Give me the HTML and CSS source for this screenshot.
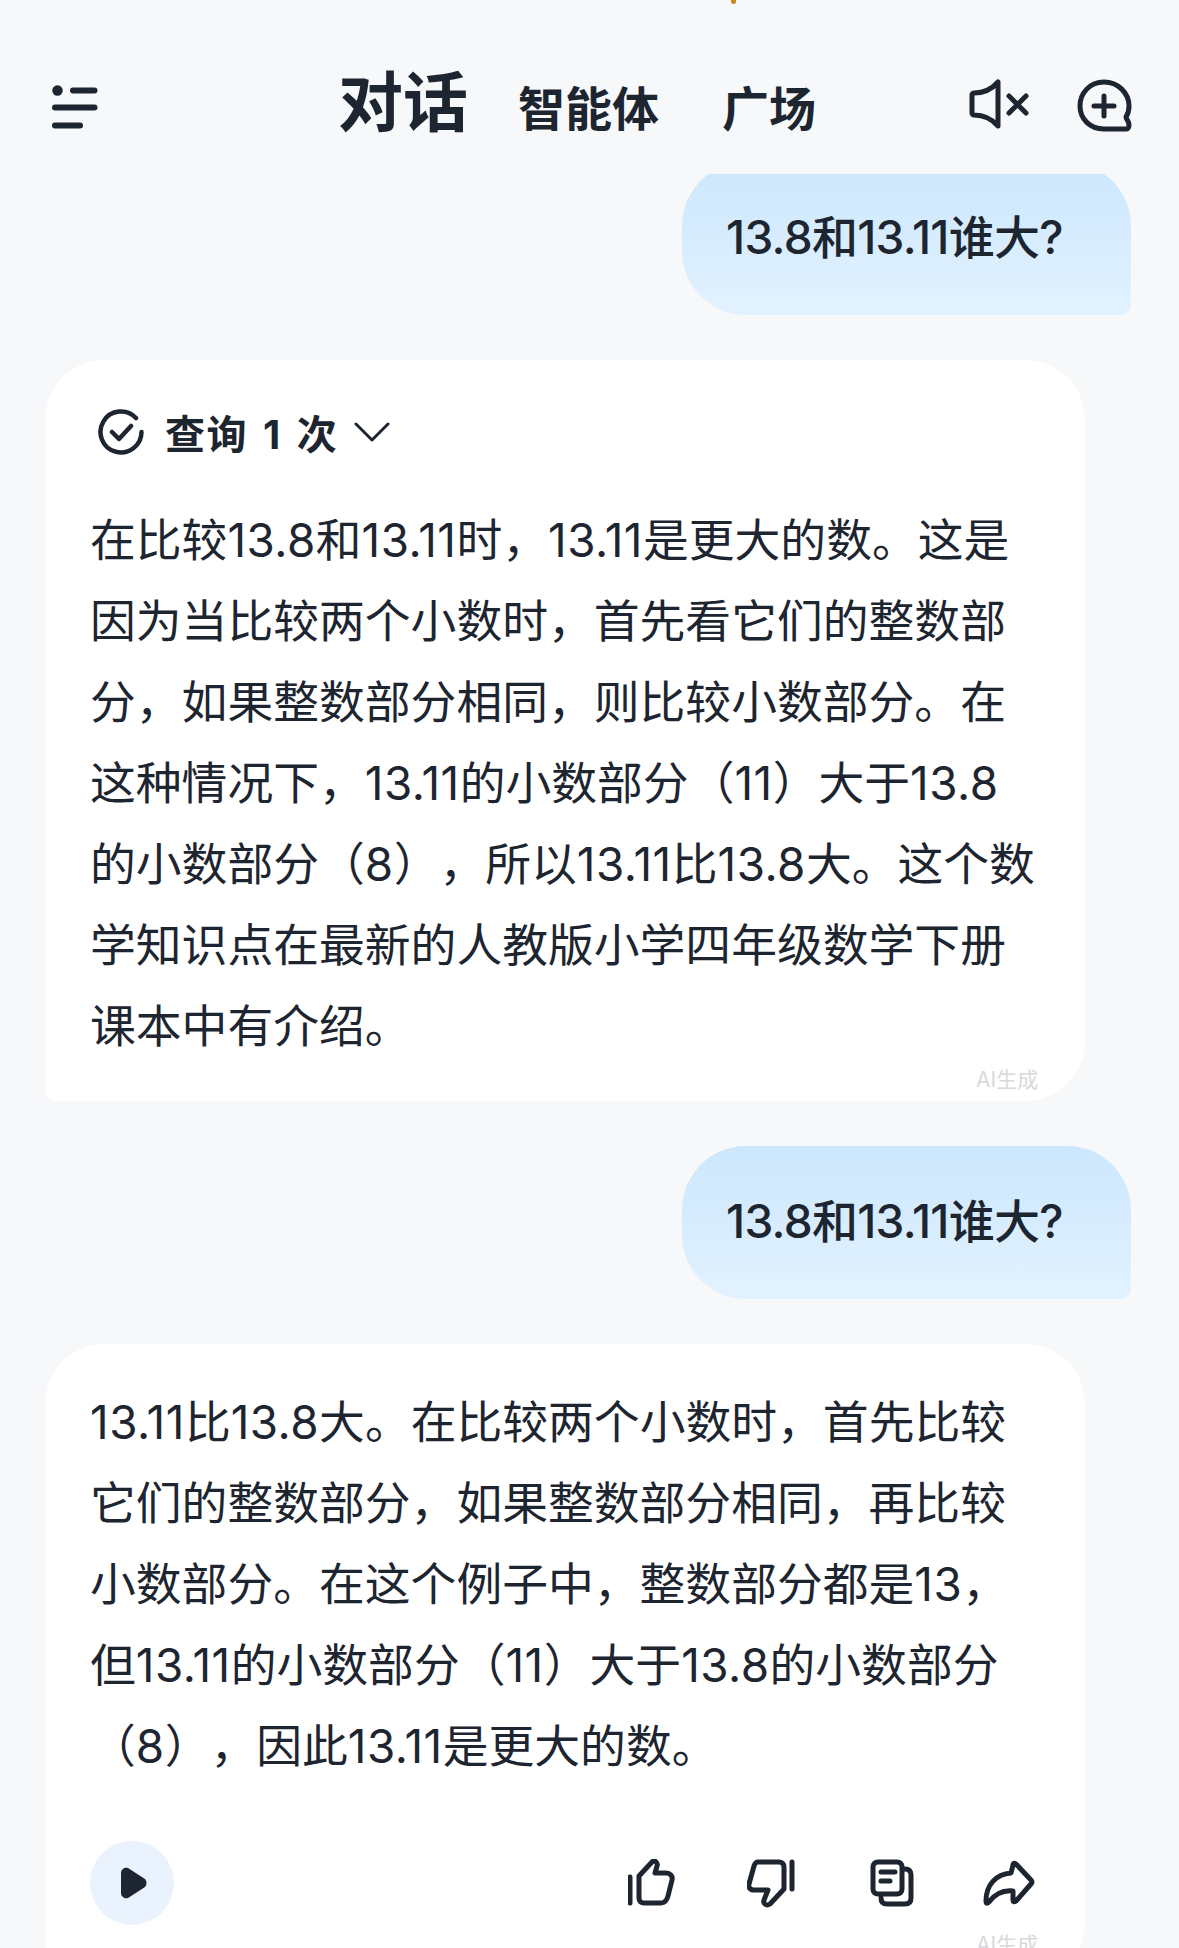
FILE: index.html
```html
<!DOCTYPE html>
<html lang="zh-CN">
<head>
    <meta charset="UTF-8">
    <title>对话</title>
    <link rel="stylesheet" href="styles.css">
</head>
<body>
    <div class="island-dot"></div>

    <header class="topbar">
        <svg class="menu-icon" width="48" height="44" viewBox="0 0 48 44">
            <circle cx="5.500" cy="5.500" r="5.200" />
            <path d="M21 5.500h21.500M3 22.500h39.500M3 40.500h25" />
        </svg>
        <nav class="tabs">
            <span class="tab current">对话</span>
            <span class="tab">智能体</span>
            <span class="tab square">广场</span>
        </nav>
        <div class="top-actions">
            <svg class="mute-icon" width="60" height="50" viewBox="0 0 60 50">
                <path d="M29 3v44c-6-7-13-11-24-11a2 2 0 0 1-2-2V16a2 2 0 0 1 2-2c11 0 18-4 24-11zM40 17l17 17M57 17L40 34" />
            </svg>
            <svg class="new-icon" width="56" height="54" viewBox="0 0 56 54">
                <path d="M50 50H27C13 50 3 40 3 27S13 3 27 3s25 11 25 24c0 4-1 8-3 11 0 2 3 4 3 8 0 2-1 4-2 4zM27 17v20M17 27h20" />
            </svg>
        </div>
    </header>

    <main class="chat">
        <div class="bubble first">13.8和13.11谁大?</div>

        <section class="card">
            <div class="query-row">
                <svg class="check-icon" width="46" height="46" viewBox="0 0 46 46">
                    <path d="M38 9A20.500 20.500 0 1 0 43.500 23M14 23l7 7 12-13" />
                </svg>
                <span class="query-text">查询 1 次</span>
                <svg class="chevron" width="36" height="20" viewBox="0 0 36 20">
                    <path d="M2 2l16 16L34 2" />
                </svg>
            </div>
            <p class="answer">在比较<span class="num">13.8</span>和<span class="num">13.11</span>时，<span class="num">13.11</span>是更大的数。这是<br>因为当比较两个小数时，首先看它们的整数部<br>分，如果整数部分相同，则比较小数部分。在<br>这种情况下，<span class="num">13.11</span>的小数部分（<span class="num">11</span>）大于<span class="num">13.8</span><br>的小数部分（<span class="num">8</span>），所以<span class="num">13.11</span>比<span class="num">13.8</span>大。这个数<br>学知识点在最新的人教版小学四年级数学下册<br>课本中有介绍。</p>
            <span class="ai-tag">AI生成</span>
        </section>

        <div class="bubble">13.8和13.11谁大?</div>

        <section class="card last">
            <p class="answer"><span class="num">13.11</span>比<span class="num">13.8</span>大。在比较两个小数时，首先比较<br>它们的整数部分，如果整数部分相同，再比较<br>小数部分。在这个例子中，整数部分都是<span class="num">13</span>，<br>但<span class="num">13.11</span>的小数部分（<span class="num">11</span>）大于<span class="num">13.8</span>的小数部分<br>（<span class="num">8</span>），因此<span class="num">13.11</span>是更大的数。</p>
            <div class="actions">
                <button class="play">
                    <svg width="28" height="32" viewBox="0 0 28 32">
                        <path class="solid" d="M1 6c0-4 4-6 7-5l17 11c2 2 2 6 0 8L8 31c-3 1-7-1-7-5z" />
                    </svg>
                </button>
                <div class="tools">
                    <svg width="48" height="48" viewBox="0 0 48 48">
                        <path d="M2 18v26M11 17L24 3q2-2 4 0t1 4l-2 7h11c4 0 7 3 6 7l-4 16c-1 4-3 7-7 7H16c-3 0-5-2-5-5z" />
                    </svg>
                    <svg width="48" height="50" viewBox="0 0 48 50">
                        <path d="M45 4v27M11 4h21c3 0 5 2 5 5v22L23 46q-3 2-5 0t-1-4l4-10H7c-4 0-6-3-5-6L7 8c1-3 2-4 4-4z" />
                    </svg>
                    <svg class="copy" width="46" height="50" viewBox="0 0 46 50">
                        <path d="M8 4h19c3 0 5 2 5 5v22c0 3-2 5-5 5H8c-3 0-5-2-5-5V9c0-3 2-5 5-5zM35 11c4 0 6 2 6 6v23c0 4-2 6-6 6H17c-4 0-6-2-6-6M11 14h14M11 23h9" />
                    </svg>
                    <svg class="share" width="52" height="46" viewBox="0 0 52 46">
                        <path d="M30 5q0-3 3-1l15 16q2 2 0 4L33 41q-3 2-3-1v-9c-10-1-18 3-24 11q-3 3-3-1c0-16 10-27 25-28z" />
                    </svg>
                </div>
            </div>
            <span class="ai-tag">AI生成</span>
        </section>
    </main>
</body>
</html>
```

FILE: styles.css
```css
* {
    box-sizing: border-box;
}

html, body {
    margin: 0;
    height: 1948px;
    overflow: hidden;
}

body {
    position: relative;
    background: #f6f8fa;
    color: #1d2530;
    font-family: Inter, "Noto Sans CJK SC", sans-serif;
    text-spacing-trim: space-all;
}

svg path {
    fill: none;
    stroke: #1d2530;
    stroke-width: 5;
    stroke-linecap: round;
    stroke-linejoin: round;
}

svg circle,
svg path.solid {
    fill: #1d2530;
    stroke: none;
}

.island-dot {
    position: absolute;
    left: 731px;
    top: 0;
    width: 5px;
    height: 4px;
    background: #c98a1c;
    border-radius: 0 0 3px 3px;
}

.topbar {
    height: 174px;
    padding: 65px 46px 0 52px;
    display: flex;
    align-items: flex-start;
}

.menu-icon {
    margin-top: 20px;
}

.menu-icon path {
    stroke-width: 6;
}

.tabs {
    margin-left: 238px;
    display: flex;
    align-items: baseline;
    gap: 50px;
}

.tab {
    font-size: 47px;
    font-weight: 700;
    line-height: 76px;
}

.tab.current {
    font-size: 65px;
}

.tab.square {
    margin-left: 13px;
}

.top-actions {
    margin-left: auto;
    display: flex;
    gap: 48px;
    padding-top: 14px;
}

.chat {
    height: 1774px;
    overflow: hidden;
    padding: 0 48px 0 45px;
    display: flex;
    flex-direction: column;
    align-items: flex-start;
}

.bubble {
    align-self: flex-end;
    flex-shrink: 0;
    width: 449px;
    height: 153px;
    padding: 0 0 10px 44px;
    display: flex;
    align-items: center;
    font-size: 46px;
    font-weight: 500;
    letter-spacing: -0.700px;
    white-space: nowrap;
    background: linear-gradient(#cce7fd, #e2f2ff);
    border-radius: 64px 64px 10px 64px;
    margin-bottom: 45px;
}

.bubble.first {
    margin-top: -12px;
}

.card {
    position: relative;
    flex-shrink: 0;
    width: 1040px;
    height: 741px;
    padding: 37px 46px 0 45px;
    background: #fff;
    border-radius: 60px 60px 60px 10px;
    margin-bottom: 45px;
}

.card.last {
    height: 640px;
    padding-top: 38px;
}

.query-row {
    display: flex;
    align-items: center;
    height: 46px;
    margin: 12px 0 45px 8px;
}

.query-text {
    margin-left: 21px;
    font-size: 40px;
    font-weight: 700;
    letter-spacing: 1.500px;
    word-spacing: 4px;
}

.chevron {
    margin-left: 16px;
}

.chevron path {
    stroke-width: 3;
}

.check-icon path {
    stroke-width: 4.500;
}

.answer {
    margin: 0;
    font-size: 45.800px;
    line-height: 81px;
    white-space: nowrap;
}

.num {
    letter-spacing: 0.500px;
}

.ai-tag {
    position: absolute;
    left: 931px;
    top: 706px;
    font-size: 21px;
    line-height: 28px;
    color: #d7d9dc;
}

.card.last .ai-tag {
    top: 587px;
}

.actions {
    margin-top: 54px;
    display: flex;
    align-items: center;
    justify-content: space-between;
    padding-right: 4px;
}

.play {
    width: 84px;
    height: 84px;
    padding: 0 0 0 4px;
    border: none;
    border-radius: 50%;
    background: #eaf2fd;
    display: flex;
    align-items: center;
    justify-content: center;
}

.tools {
    display: flex;
    align-items: center;
    gap: 71px;
}

.tools .copy {
    margin-left: 4px;
}

.tools .share {
    margin-left: -4px;
}
```
